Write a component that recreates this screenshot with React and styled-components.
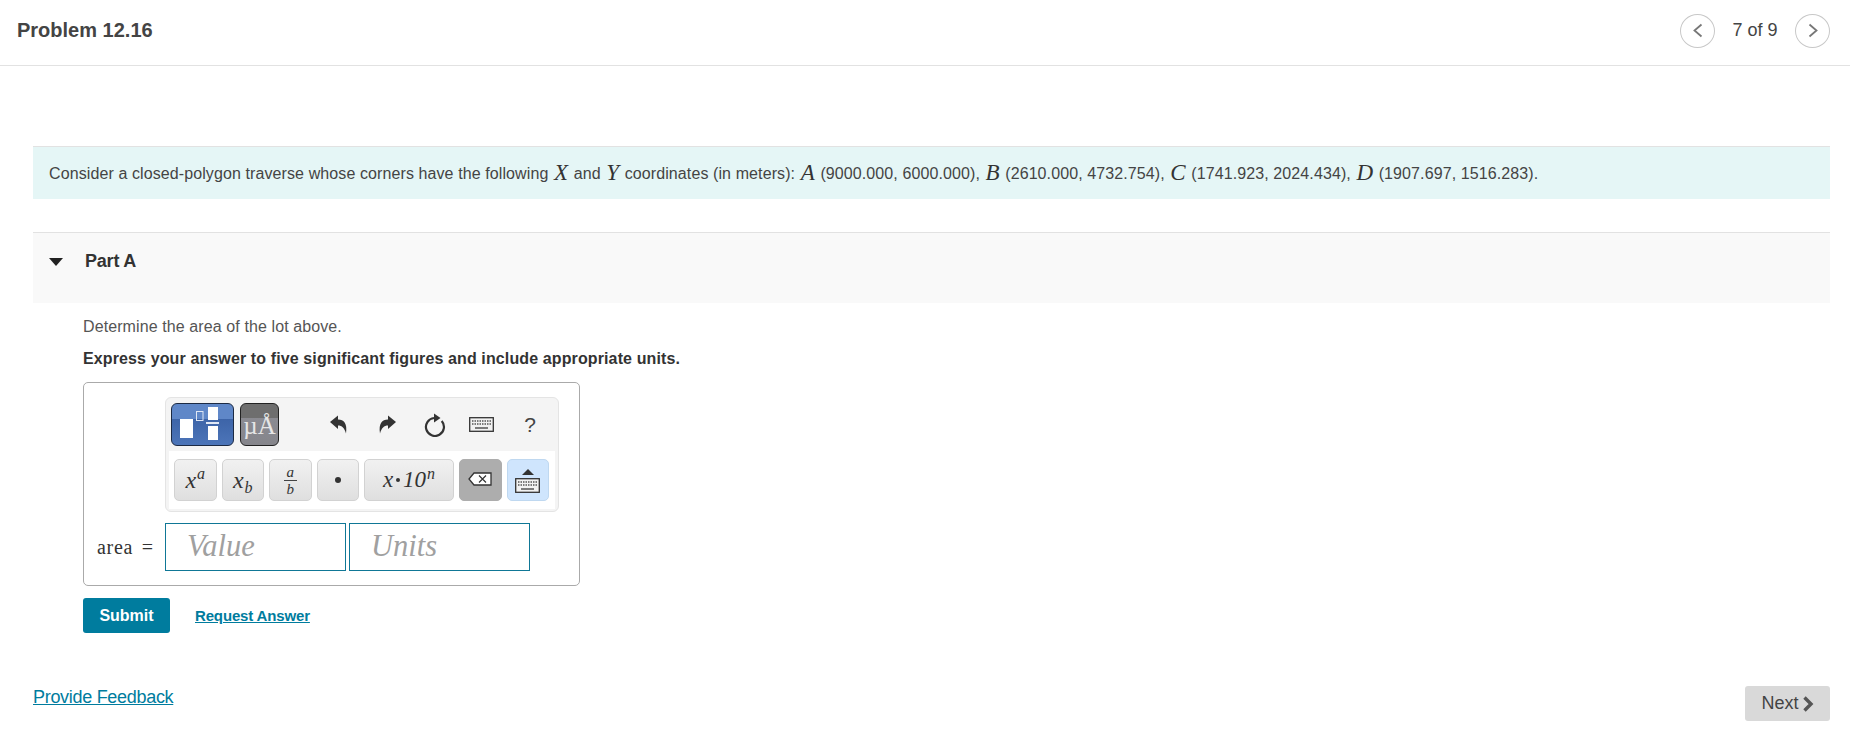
import React from 'react';
import styled, { createGlobalStyle } from 'styled-components';

const GlobalStyle = createGlobalStyle`
  html, body {
    margin: 0;
    padding: 0;
    background: #fff;
    font-family: "Liberation Sans", Arial, sans-serif;
    color: #333;
  }
  * {
    box-sizing: border-box;
  }
`;

const App = () => {
  return (
    <Page>
      <GlobalStyle />
      <Header>
        <Title>Problem 12.16</Title>
        <Pager>
          <RoundButton>
            <svg width="14" height="16" viewBox="0 0 14 16">
              <path d="M10.5 1.500 L3.500 7.500 L10.500 13.500" fill="none" stroke="#777" strokeWidth="1.800" />
            </svg>
          </RoundButton>
          <PagerText>7 of 9</PagerText>
          <RoundButton>
            <svg width="14" height="16" viewBox="0 0 14 16">
              <path d="M3.500 1.500 L10.500 7.500 L3.500 13.500" fill="none" stroke="#777" strokeWidth="1.800" />
            </svg>
          </RoundButton>
        </Pager>
      </Header>

      <Main>
        <Intro>
          Consider a closed-polygon traverse whose corners have the following <MathVar>X</MathVar> and{' '}
          <MathVar>Y</MathVar> coordinates (in meters): <MathVar>A</MathVar> (9000.000, 6000.000),{' '}
          <MathVar>B</MathVar> (2610.000, 4732.754), <MathVar>C</MathVar> (1741.923, 2024.434),{' '}
          <MathVar>D</MathVar> (1907.697, 1516.283).
        </Intro>

        <PartHeader>
          <svg width="14" height="8" viewBox="0 0 14 8">
            <path d="M0 0 H14 L7 8 Z" fill="#222" />
          </svg>
          <PartTitle>Part A</PartTitle>
        </PartHeader>

        <PartBody>
          <Question>Determine the area of the lot above.</Question>
          <Instruction>Express your answer to five significant figures and include appropriate units.</Instruction>

          <AnswerBox>
            <Toolbar>
              <ToolRow>
                <TemplateButton>
                  <svg width="61" height="41" viewBox="0 0 61 41">
                    <rect x="8" y="15" width="13" height="19" fill="#fff" />
                    <rect x="24.500" y="7.500" width="6.500" height="9" fill="none" stroke="#dfe7f5" strokeWidth="1" />
                    <rect x="36" y="3" width="10" height="13" fill="#fff" />
                    <rect x="34" y="18" width="13" height="2" fill="#dfe7f5" />
                    <rect x="36" y="22" width="10" height="14" fill="#fff" />
                  </svg>
                </TemplateButton>
                <UnitsButton>µÅ</UnitsButton>
                <ActionGroup>
                  <ActionButton>
                    <svg width="20" height="22" viewBox="0 0 20 22">
                      <path d="M1 8 L9 1.500 V5.500 C15 5.500 18.500 9.500 17 19.500 C15.500 14 13 11.500 9 11.500 V15 Z" fill="#333" />
                    </svg>
                  </ActionButton>
                  <ActionButton>
                    <svg width="20" height="22" viewBox="0 0 20 22">
                      <path d="M19 8 L11 1.500 V5.500 C5 5.500 1.500 9.500 3 19.500 C4.500 14 7 11.500 11 11.500 V15 Z" fill="#333" />
                    </svg>
                  </ActionButton>
                  <ActionButton>
                    <svg width="22" height="24" viewBox="0 0 22 24">
                      <path d="M17.700 8 A9 9 0 1 1 10 5" fill="none" stroke="#333" strokeWidth="2.200" />
                      <path d="M10 0.500 L16.500 5 L10 9.500 Z" fill="#333" />
                    </svg>
                  </ActionButton>
                  <KeyboardAction>
                    <KeyboardIcon />
                  </KeyboardAction>
                  <HelpButton>?</HelpButton>
                </ActionGroup>
              </ToolRow>

              <KeyRow>
                <KeyButton>
                  <MathItalic $size={24}>x</MathItalic>
                  <Sup>a</Sup>
                </KeyButton>
                <KeyButton>
                  <MathItalic $size={24}>x</MathItalic>
                  <Sub>b</Sub>
                </KeyButton>
                <KeyButton>
                  <Fraction>
                    <span>a</span>
                    <span>b</span>
                  </Fraction>
                </KeyButton>
                <KeyButton>
                  <Dot />
                </KeyButton>
                <KeyButton $wide>
                  <MathItalic $size={23}>x</MathItalic>
                  <SmallDot />
                  <MathItalic $size={23}>10</MathItalic>
                  <Sup>n</Sup>
                </KeyButton>
                <BackspaceKey>
                  <svg width="24" height="14" viewBox="0 0 24 14">
                    <path d="M6 1 H23 V13 H6 L1 7 Z" fill="#fff" stroke="#333" strokeWidth="1.300" />
                    <path d="M11 3.500 L18 10.500 M18 3.500 L11 10.500" stroke="#333" strokeWidth="1.200" />
                  </svg>
                </BackspaceKey>
                <ToggleKey>
                  <svg width="12" height="6" viewBox="0 0 12 6">
                    <path d="M6 0 L12 6 H0 Z" fill="#333" />
                  </svg>
                  <KeyboardIcon />
                </ToggleKey>
              </KeyRow>
            </Toolbar>

            <AnswerRow>
              <AnswerLabel>area =</AnswerLabel>
              <AnswerInput placeholder="Value" readOnly />
              <AnswerInput placeholder="Units" readOnly />
            </AnswerRow>
          </AnswerBox>

          <Actions>
            <SubmitButton>Submit</SubmitButton>
            <RequestLink href="#">Request Answer</RequestLink>
          </Actions>
        </PartBody>

        <Footer>
          <FeedbackLink href="#">Provide Feedback</FeedbackLink>
          <NextButton>
            Next
            <svg width="12" height="16" viewBox="0 0 12 16">
              <path d="M2.500 1.500 L9 8 L2.500 14.500" fill="none" stroke="#555" strokeWidth="3.400" />
            </svg>
          </NextButton>
        </Footer>
      </Main>
    </Page>
  );
};

const KeyboardIcon = () => (
  <svg width="25" height="15" viewBox="0 0 25 15">
    <rect x="0.700" y="0.700" width="23.600" height="13.600" fill="#f2f2f2" stroke="#333" strokeWidth="1.300" />
    <path d="M3 4 H22" stroke="#555" strokeWidth="1.500" strokeDasharray="1.500 1" />
    <path d="M3 7 H22" stroke="#555" strokeWidth="1.500" strokeDasharray="1.500 1" />
    <path d="M6 11 H19" stroke="#555" strokeWidth="1.500" />
  </svg>
);

const Page = styled.div`
  width: 1850px;
  height: 736px;
  overflow: hidden;
`;
const Header = styled.header`
  height: 66px;
  display: flex;
  align-items: center;
  justify-content: space-between;
  padding: 0 20px 4px 17px;
  border-bottom: 1px solid #e2e2e2;
`;
const Title = styled.h1`
  margin: 0;
  font-size: 20px;
  font-weight: 700;
  color: #444;
`;
const Pager = styled.div`
  display: flex;
  align-items: center;
`;
const RoundButton = styled.button`
  width: 35px;
  height: 34px;
  padding: 0;
  display: flex;
  align-items: center;
  justify-content: center;
  background: #fff;
  border: 1px solid #c8c8c8;
  border-radius: 50%;
`;
const PagerText = styled.span`
  width: 80px;
  text-align: center;
  font-size: 18px;
  color: #444;
`;
const Main = styled.main`
  padding: 80px 20px 0 33px;
`;
const Intro = styled.p`
  margin: 0;
  height: 53px;
  padding: 0 16px;
  line-height: 52px;
  font-size: 16px;
  letter-spacing: 0.1px;
  color: #444;
  background: #e5f6f6;
  border-top: 1px solid #e2e2e2;
  white-space: nowrap;
`;
const MathVar = styled.i`
  margin: 0 1px;
  font-family: "Liberation Serif", "Times New Roman", serif;
  font-size: 23px;
  color: #333;
  vertical-align: -1px;
`;
const PartHeader = styled.div`
  margin-top: 33px;
  height: 71px;
  padding: 0 0 13px 16px;
  display: flex;
  align-items: center;
  gap: 22px;
  background: #f9f9f9;
  border-top: 1px solid #e2e2e2;
`;
const PartTitle = styled.h2`
  margin: 0;
  font-size: 18px;
  font-weight: 700;
  letter-spacing: -0.2px;
  color: #333;
`;
const PartBody = styled.section`
  padding: 16px 0 0 50px;
`;
const Question = styled.p`
  margin: 0;
  height: 16px;
  line-height: 16px;
  font-size: 16px;
  letter-spacing: 0.1px;
  color: #555;
`;
const Instruction = styled.p`
  margin: 16px 0 0;
  height: 16px;
  line-height: 16px;
  font-size: 16px;
  font-weight: 700;
  letter-spacing: 0.12px;
  color: #333;
`;
const AnswerBox = styled.div`
  margin-top: 15px;
  width: 497px;
  height: 204px;
  padding: 14px 0 0 81px;
  border: 1px solid #aaa;
  border-radius: 5px;
`;
const Toolbar = styled.div`
  width: 394px;
  height: 115px;
  padding: 0 3px 2px;
  background: #f4f4f4;
  border: 1px solid #e4e4e4;
  border-radius: 6px;
`;
const ToolRow = styled.div`
  height: 53px;
  padding: 5px 0 0 2px;
  display: flex;
  align-items: flex-start;
  gap: 6px;
`;
const TemplateButton = styled.div`
  width: 63px;
  height: 43px;
  display: flex;
  align-items: center;
  justify-content: center;
  border: 1px solid #1c2a44;
  border-radius: 6px;
  background: linear-gradient(#5f87c8 0, #5f87c8 36%, #3d64a8 36%, #4c75b9 100%);
`;
const UnitsButton = styled.div`
  width: 42px;
  height: 43px;
  padding-top: 5px;
  text-align: center;
  font-family: "Liberation Serif", serif;
  font-size: 25px;
  line-height: 34px;
  color: #e6e6e6;
  white-space: nowrap;
  border: 1px solid #222;
  border-radius: 6px;
  background: linear-gradient(#6e6e6e 0, #6e6e6e 33%, #8b8b92 33%, #85858b 100%);
`;
const ActionGroup = styled.div`
  margin-left: 30px;
  height: 43px;
  display: flex;
  align-items: center;
`;
const ActionButton = styled.div`
  width: 48px;
  display: flex;
  align-items: center;
  justify-content: center;
`;
const KeyboardAction = styled(ActionButton)`
  padding-right: 4px;
`;
const HelpButton = styled(ActionButton)`
  padding-right: 2px;
  font-size: 21px;
  color: #444;
`;
const KeyRow = styled.div`
  height: 58px;
  padding: 8px 0 0 5px;
  display: flex;
  gap: 5px;
  background: #fff;
`;
const KeyButton = styled.div`
  width: ${({ $wide }) => ($wide ? '90px' : '42.5px')};
  height: 42px;
  display: flex;
  align-items: center;
  justify-content: center;
  color: #333;
  border: 1px solid #d2d2d2;
  border-radius: 5px;
  background: linear-gradient(#f1f1f1, #dfdfdf);
`;
const BackspaceKey = styled(KeyButton)`
  background: #adadad;
  border-color: #adadad;
  padding-bottom: 3px;
`;
const ToggleKey = styled(KeyButton)`
  flex-direction: column;
  gap: 3px;
  background: #cfe5fd;
  border-color: #bfd8f0;
  padding-top: 2px;
`;
const MathItalic = styled.i`
  font-family: "Liberation Serif", serif;
  font-size: ${({ $size }) => $size}px;
`;
const Sup = styled.i`
  font-family: "Liberation Serif", serif;
  font-size: 16px;
  align-self: flex-start;
  margin: 5px 0 0 1px;
`;
const Sub = styled.i`
  font-family: "Liberation Serif", serif;
  font-size: 16px;
  align-self: flex-end;
  margin: 0 0 3px 1px;
`;
const Fraction = styled.i`
  display: flex;
  flex-direction: column;
  align-items: center;
  font-family: "Liberation Serif", serif;
  font-size: 15px;
  line-height: 16px;
  span:first-child {
    padding: 0 3px;
    border-bottom: 1px solid #444;
  }
`;
const Dot = styled.span`
  width: 6px;
  height: 6px;
  border-radius: 50%;
  background: #333;
`;
const SmallDot = styled.span`
  width: 4px;
  height: 4px;
  margin: 0 3px;
  border-radius: 50%;
  background: #333;
`;
const AnswerRow = styled.div`
  margin-top: 11px;
  margin-left: -70px;
  display: flex;
  align-items: center;
`;
const AnswerLabel = styled.span`
  width: 70px;
  padding-left: 2px;
  font-family: "Liberation Serif", serif;
  font-size: 20px;
  letter-spacing: 0.7px;
  word-spacing: 3px;
  white-space: nowrap;
  color: #333;
`;
const AnswerInput = styled.input`
  width: 181px;
  height: 48px;
  margin-right: 3px;
  padding: 0 21px 2px;
  font-family: "Liberation Serif", serif;
  font-style: italic;
  font-size: 30.5px;
  background: #fff;
  border: 1px solid #0f7796;
  outline: none;
  &::placeholder {
    color: #a0a0a0;
    opacity: 1;
  }
`;
const Actions = styled.div`
  margin-top: 12px;
  display: flex;
  align-items: center;
  gap: 25px;
`;
const SubmitButton = styled.button`
  width: 87px;
  height: 35px;
  padding: 0;
  font-family: inherit;
  font-size: 16px;
  font-weight: 700;
  color: #fff;
  background: #007c9e;
  border: none;
  border-radius: 3px;
`;
const RequestLink = styled.a`
  padding-bottom: 1px;
  font-size: 15px;
  font-weight: 700;
  letter-spacing: -0.15px;
  color: #007c9e;
`;
const Footer = styled.footer`
  margin-top: 53px;
  display: flex;
  align-items: center;
  justify-content: space-between;
`;
const FeedbackLink = styled.a`
  margin-bottom: 12px;
  font-size: 18px;
  letter-spacing: -0.3px;
  color: #007c9e;
`;
const NextButton = styled.button`
  width: 85px;
  height: 35px;
  padding: 0;
  display: flex;
  align-items: center;
  justify-content: center;
  gap: 3px;
  font-family: inherit;
  font-size: 18px;
  color: #444;
  background: #d9d9d9;
  border: none;
  border-radius: 3px;
`;

export default App;
